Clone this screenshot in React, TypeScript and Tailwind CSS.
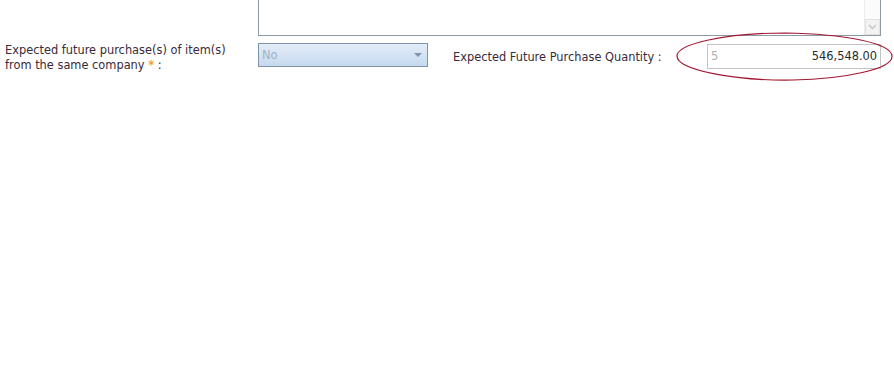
import React from "react";

export default function App() {
  return (
    <div className="relative w-[894px] h-[384px] bg-white overflow-hidden" style={{ fontFamily: '"DejaVu Sans", Verdana, sans-serif' }}>
      {/* textarea remnant */}
      <div className="flex">
        <div className="w-[258px]" />
        <div className="w-[623px] h-[36px] border-x border-b border-[#8d9aa6] flex justify-end">
          <div className="w-[16px] h-full border-l border-[#ececec] bg-[#fbfbfb] flex flex-col justify-end">
            <div className="h-[16px] border border-[#e2e2e2] bg-[#f3f3f3] flex items-center justify-center">
              <svg width="9" height="6" viewBox="0 0 9 6">
                <path d="M1 1 L4.5 4.5 L8 1" stroke="#c8c8c8" strokeWidth="1.6" fill="none" />
              </svg>
            </div>
          </div>
        </div>
      </div>
      <div className="flex mt-[7px] text-[11.4px] leading-[15px] text-[#3a2a3a]">
        <div className="w-[258px] pl-[5px]">
          <div>Expected future purchase(s) of item(s)</div>
          <div>
            from the same company <span className="text-[#f0a040] font-bold">*</span> :
          </div>
        </div>
        <div className="w-[170px] h-[24px] border border-[#7f94aa] bg-gradient-to-b from-[#e4edf8] to-[#c6d9ef] flex items-center justify-between pl-[3px] pr-[5px]">
          <span className="text-[#9fb2c8]">No</span>
          <svg width="8" height="4" viewBox="0 0 8 4">
            <path d="M0 0 H8 L4 4 Z" fill="#8093ab" />
          </svg>
        </div>
        <div className="w-[25px]" />
        <div className="w-[254px] pt-[7px]">Expected Future Purchase Quantity :</div>
        <div className="w-[174px] h-[25px] mt-[1px] border border-[#c3c3c3] flex items-center justify-between px-[3px]">
          <span className="text-[#b0b0b0]">5</span>
          <span className="text-[#2a2a2a]">546,548.00</span>
        </div>
      </div>
      <svg className="absolute left-[675px] top-[31px]" width="219" height="52" viewBox="0 0 219 52">
        <path
          d="M110 2 C 50 2, 2 13, 2 25 C 2 39, 60 50, 118 49 C 170 48, 218 38, 217 25 C 216 12, 170 3, 110 2 Z"
          stroke="#a01830"
          strokeWidth="1.2"
          fill="none"
        />
      </svg>
    </div>
  );
}
